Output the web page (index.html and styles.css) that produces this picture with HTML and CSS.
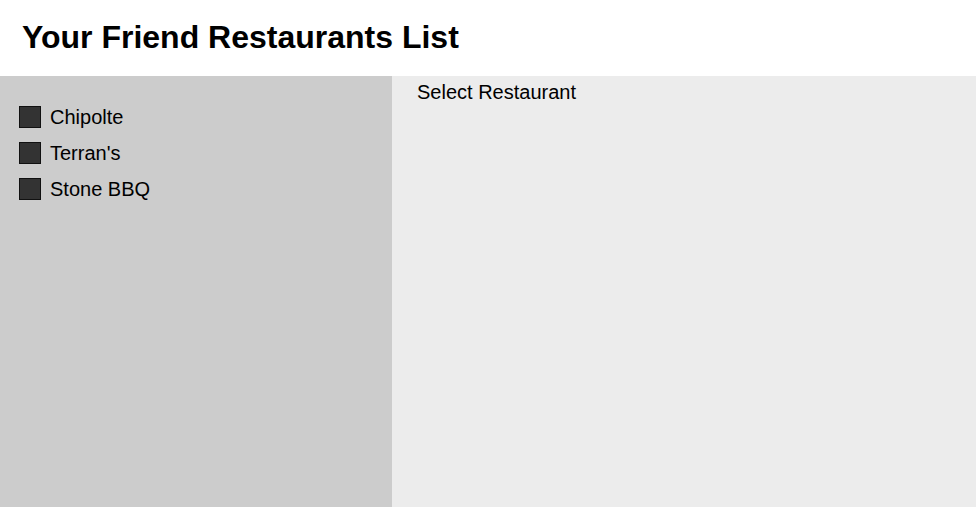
FILE: index.html
```html
<!DOCTYPE html>
<html>
<head>
<meta charset="utf-8">
<link rel="stylesheet" href="styles.css">
</head>
<body>
<header class="header"><h1 class="title">Your Friend Restaurants List</h1></header>
<div class="layout">
  <aside class="sidebar">
    <ul class="list">
      <li class="item"><span class="box"></span><span class="name">Chipolte</span></li>
      <li class="item"><span class="box"></span><span class="name">Terran's</span></li>
      <li class="item"><span class="box"></span><span class="name">Stone BBQ</span></li>
    </ul>
  </aside>
  <main class="main"><div class="prompt">Select Restaurant</div></main>
</div>
</body>
</html>
```
FILE: styles.css
```css
html, body { margin: 0; height: 100%; }
body {
  font-family: "Liberation Sans", Arial, sans-serif;
  color: #000;
  background: #fff;
  display: flex;
  flex-direction: column;
}
.header {
  height: 76px;
  box-sizing: border-box;
  padding: 0 22px 1px;
  display: flex;
  align-items: center;
  background: #fff;
}
.title {
  margin: 0;
  font-size: 32px;
  font-weight: bold;
  line-height: 37px;
}
.layout {
  flex: 1;
  display: flex;
}
.sidebar {
  width: 392px;
  background: #cccccc;
  padding: 30px 0 0 19px;
  box-sizing: border-box;
}
.list {
  list-style: none;
  margin: 0;
  padding: 0;
  display: flex;
  flex-direction: column;
  gap: 14px;
}
.item {
  display: flex;
  align-items: center;
  height: 22px;
  font-size: 20px;
}
.box {
  width: 20px;
  height: 20px;
  border: 1px solid #111;
  background: #333;
  margin-right: 9px;
}
.main {
  flex: 1;
  background: #ececec;
  padding: 5px 25px;
}
.prompt {
  font-size: 20px;
  line-height: 23px;
}
```
